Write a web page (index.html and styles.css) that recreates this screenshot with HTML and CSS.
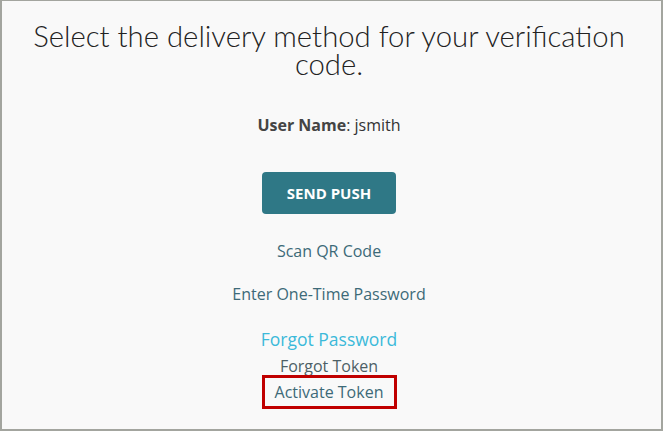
FILE: index.html
```html
<!DOCTYPE html>
<html>
<head>
<meta charset="utf-8">
<link rel="stylesheet" href="styles.css">
</head>
<body>
<div class="frame">
  <h1 class="title">Select the delivery method for your verification code.</h1>
  <p class="user"><b>User Name</b>: jsmith</p>
  <button class="push">SEND PUSH</button>
  <a class="opt scan">Scan QR Code</a>
  <a class="opt otp">Enter One-Time Password</a>
  <a class="forgot-pw">Forgot Password</a>
  <a class="forgot-token">Forgot Token</a>
  <a class="activate">Activate Token</a>
</div>
</body>
</html>
```
FILE: styles.css
```css
html, body {
  margin: 0;
  padding: 0;
}
body {
  width: 663px;
  height: 431px;
  font-family: "Open Sans", "Liberation Sans", sans-serif;
}
.frame {
  box-sizing: border-box;
  width: 663px;
  height: 431px;
  padding-right: 5px;
  background: #f9f9f9;
  border: 2px solid #a3a59f;
  border-top-width: 1px;
  display: flex;
  flex-direction: column;
  align-items: center;
  overflow: hidden;
}
.title {
  margin: 21px 0 0;
  width: 610px;
  font-family: Lato, "Liberation Sans", sans-serif;
  font-weight: 300;
  font-size: 29.3px;
  line-height: 28px;
  color: #222;
  text-align: center;
}
.user {
  margin: 36px 0 0;
  font-size: 16px;
  line-height: 22px;
  color: #333;
}
.user b {
  font-weight: 700;
  color: #444;
}
.push {
  margin-top: 36px;
  width: 134px;
  height: 42px;
  border: none;
  border-radius: 4px;
  background: #2f7886;
  color: #fff;
  font-family: "Open Sans", "Liberation Sans", sans-serif;
  font-weight: 700;
  font-size: 15px;
  padding: 0;
}
.opt {
  font-size: 16px;
  line-height: 22px;
  color: #3d6a78;
}
.scan { margin-top: 26px; }
.otp { margin-top: 21px; }
.forgot-pw {
  margin-top: 22px;
  font-size: 17.5px;
  line-height: 24px;
  color: #3cb9d9;
}
.forgot-token {
  margin-top: 4px;
  font-size: 16px;
  line-height: 22px;
  color: #4d5f66;
}
.activate {
  margin-top: -2px;
  box-sizing: border-box;
  width: 135px;
  height: 34px;
  border: 3px solid #c00000;
  display: flex;
  align-items: center;
  justify-content: center;
  font-size: 16px;
  color: #3d6a78;
}
```
